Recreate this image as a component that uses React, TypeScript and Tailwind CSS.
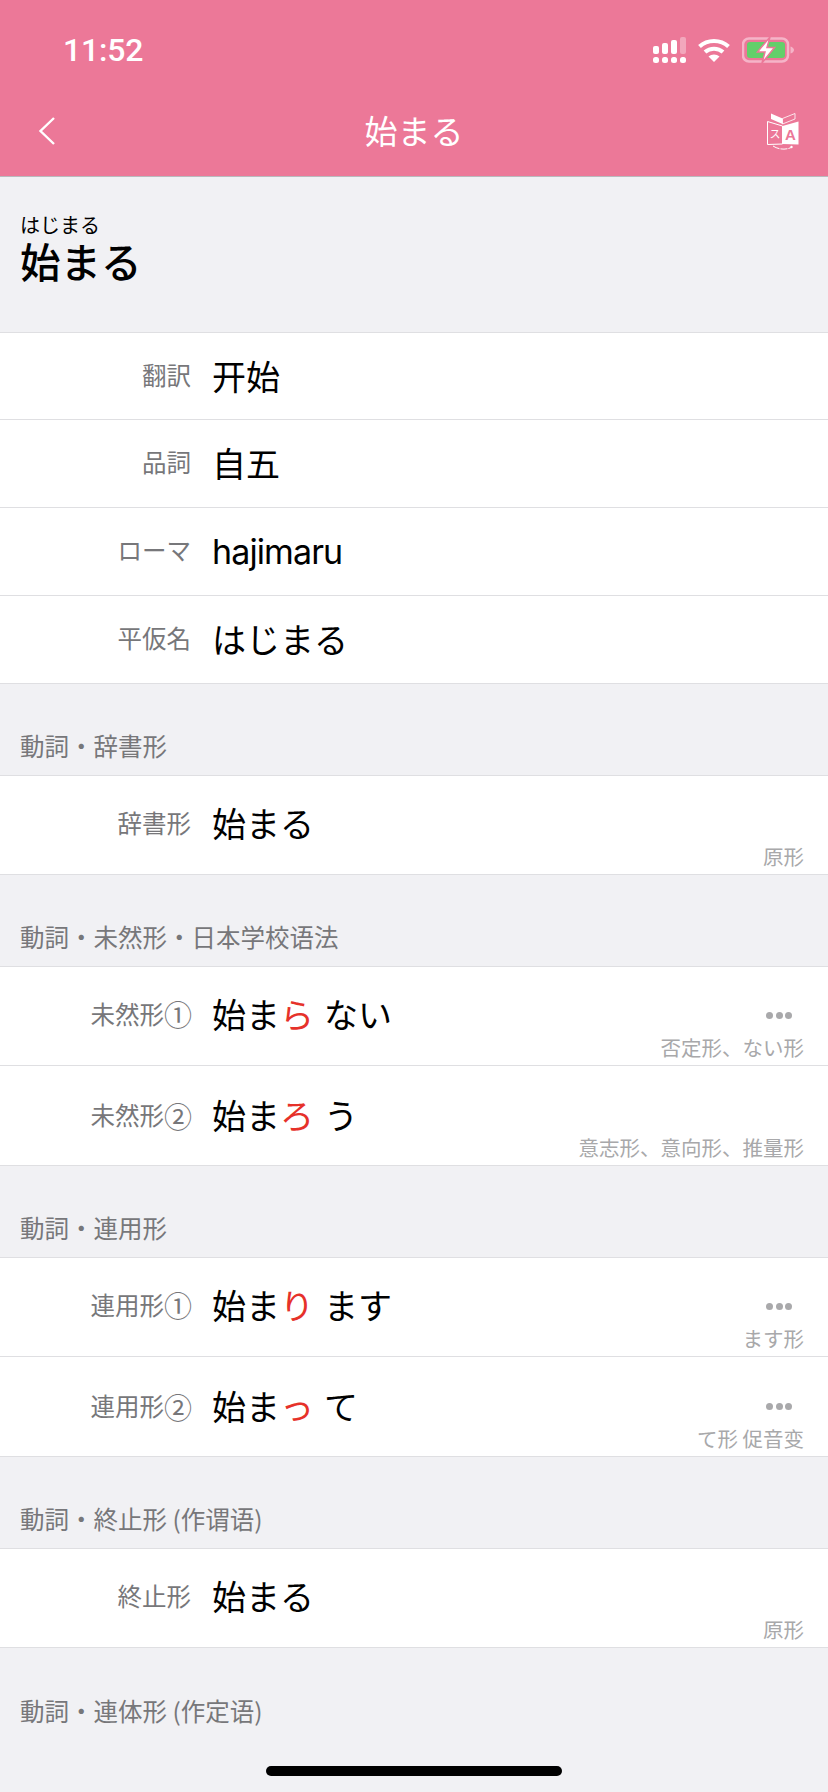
import React from 'react';

const jp = "font-['Noto_Sans_CJK_JP','Noto_Sans_CJK_SC',sans-serif]";

const StatusIcons = () => (
  <div className="flex items-center">
    <svg width="33" height="26" viewBox="0 0 33 26" fill="white">
      <rect x="0" y="9" width="6" height="8" rx="2" />
      <rect x="9" y="6" width="6" height="11" rx="2" />
      <rect x="18" y="3" width="6" height="14" rx="2" />
      <rect x="27" y="0" width="6" height="17" rx="2" opacity="0.35" />
      <rect x="0" y="20" width="6" height="6" rx="2.5" />
      <rect x="9" y="20" width="6" height="6" rx="2.5" />
      <rect x="18" y="20" width="6" height="6" rx="2.5" />
      <rect x="27" y="20" width="6" height="6" rx="2.5" />
    </svg>
    <svg className="ml-[12px]" width="32" height="24" viewBox="0 0 32 24" fill="none" stroke="white" strokeWidth="4">
      <path d="M1.5 8.5C9.5 1 22.500 1 30.500 8.500" />
      <path d="M7 14C12 9.500 20 9.500 25 14" />
      <path d="M16 24L10.500 18.500C13.500 15.800 18.500 15.800 21.500 18.500Z" fill="white" stroke="none" />
    </svg>
    <svg className="ml-[12px]" width="52" height="26" viewBox="0 0 52 26" fill="none">
      <rect x="1" y="1.500" width="45" height="23" rx="6" stroke="#f5b4c8" strokeWidth="2.500" />
      <rect x="5" y="5" width="38" height="16" rx="3" fill="#63cf6a" />
      <path d="M48.500 9.500C50.500 10 52 11.500 52 13C52 14.500 50.500 16 48.500 16.500Z" fill="#f5b4c8" />
      <path d="M28 0L15.500 15H23L20 26L32.500 10.500H25Z" fill="white" stroke="#ec7898" strokeWidth="1.500" />
    </svg>
  </div>
);

const TranslateIcon = () => (
  <svg width="32" height="37" viewBox="0 0 32 37" fill="none">
    <path d="M4 0.500L15.500 5.500V11L4 6Z" fill="white" />
    <path d="M28 0.500L15.500 5.500V11L28 6Z" stroke="white" strokeWidth="0.800" />
    <path d="M0.500 8.500L15.500 13V31L0.500 31.500Z" stroke="white" strokeWidth="1" />
    <path d="M15.500 13L31.500 8.500V31.500L15.500 31Z" fill="white" />
    <text x="23.500" y="27" textAnchor="middle" fontSize="15" fontWeight="700" fill="#ec7898" fontFamily="Liberation Sans">A</text>
    <text x="8" y="25" textAnchor="middle" fontSize="11" fill="white" fontFamily="Noto Sans CJK JP">ス</text>
    <path d="M6 33C12 37 20 37 25 34" stroke="white" strokeWidth="1" strokeDasharray="7 1" />
    <circle cx="24.500" cy="34" r="1.200" fill="white" />
  </svg>
);

const Header = () => (
  <div className={`bg-[#ec7898] border-b border-[#b9b9bd] text-white h-[177px] ${jp}`}>
    <div className="flex items-center justify-between h-[88px] pl-[63px] pr-[34px] pt-[12px]">
      <span className="font-['Roboto',sans-serif] font-medium text-[32px] tracking-[-0.2px]">11:52</span>
      <StatusIcons />
    </div>
    <div className="grid grid-cols-[1fr_auto_1fr] items-center h-[88px] pl-[38px] pr-[29px] pb-[2px]">
      <svg width="18" height="28" viewBox="0 0 18 28" fill="none" stroke="white" strokeWidth="2.400">
        <path d="M16 1L2.500 14L16 27" />
      </svg>
      <span className="text-[33px] leading-none pb-[2px] mr-[9px]">始まる</span>
      <div className="justify-self-end">
        <TranslateIcon />
      </div>
    </div>
  </div>
);

type RowProps = {
  label: string;
  head?: string;
  red?: string;
  tail?: string;
  sub?: string;
  more?: boolean;
  font?: string;
  compact?: boolean;
  low?: boolean;
};

const Row = ({ label, head, red, tail, sub, more, font, compact, low }: RowProps) => {
  const circled = label.match(/[①②]/)?.[0];
  const plain = label.replace(/[①②]/, '');
  const labelPad = low ? 'pb-0' : compact ? 'pb-[2px]' : 'pb-[4px]';
  const valuePad = low ? 'pb-[2px]' : compact ? 'pb-[2px]' : 'pb-[6px]';
  return (
    <div className="flex items-stretch border-b border-[#dfdfe2] bg-white h-full">
      <div className={`w-[191px] shrink-0 flex items-center justify-end text-[24.500px] text-[#77777a] ${labelPad}`}>
        {plain}
        {circled && <span className="text-[28px] leading-none -mr-[1px]">{circled}</span>}
      </div>
      <div className={`ml-[21px] flex items-center text-[#000] text-[34px] ${valuePad} ${font || ''}`}>
        <span>{head}</span>
        {red && <span className="text-[#e6312a]">{red}</span>}
        {tail && <span className="ml-[10px]">{tail}</span>}
      </div>
      {sub && (
        <div className="ml-auto flex flex-col items-end justify-end pr-[24px] pb-[3px]">
          {more && (
            <div className="flex gap-[2.500px] mr-[12px] mb-[13px]">
              <span className="w-[7px] h-[7px] rounded-full bg-[#a9a9ab]" />
              <span className="w-[7px] h-[7px] rounded-full bg-[#a9a9ab]" />
              <span className="w-[7px] h-[7px] rounded-full bg-[#a9a9ab]" />
            </div>
          )}
          <span className="text-[20.500px] leading-[30px] text-[#a8a8aa]">{sub}</span>
        </div>
      )}
    </div>
  );
};

const SectionTitle = ({ children, noLine }: { children: string; noLine?: boolean }) => (
  <div className={`h-[92px] flex items-end pl-[20px] pb-[11px] text-[24.500px] leading-[36px] text-[#77777a] ${noLine ? '' : 'border-b border-[#dfdfe2]'}`}>
    {children}
  </div>
);

const Section = ({ title, rows }: { title: string; rows: RowProps[] }) => (
  <div>
    <SectionTitle>{title}</SectionTitle>
    {rows.map((r) => (
      <div key={r.label} className="h-[99px] nth-3:h-[100px]">
        <Row {...r} />
      </div>
    ))}
  </div>
);

const sections: { title: string; rows: RowProps[] }[] = [
  { title: '動詞・辞書形', rows: [{ label: '辞書形', head: '始まる', sub: '原形' }] },
  {
    title: '動詞・未然形・日本学校语法',
    rows: [
      { label: '未然形①', head: '始ま', red: 'ら', tail: 'ない', sub: '否定形、ない形', more: true },
      { label: '未然形②', head: '始ま', red: 'ろ', tail: 'う', sub: '意志形、意向形、推量形', low: true },
    ],
  },
  {
    title: '動詞・連用形',
    rows: [
      { label: '連用形①', head: '始ま', red: 'り', tail: 'ます', sub: 'ます形', more: true },
      { label: '連用形②', head: '始ま', red: 'っ', tail: 'て', sub: 'て形 促音变', more: true, low: true },
    ],
  },
  { title: '動詞・終止形 (作谓语)', rows: [{ label: '終止形', head: '始まる', sub: '原形' }] },
];

export default function App() {
  return (
    <div className={`relative w-[828px] h-[1792px] overflow-hidden bg-[#f1f1f4] ${jp}`}>
      <Header />
      <div className="h-[156px] border-b border-[#dfdfe2] pl-[20px] pt-[36px] text-black">
        <div className="text-[20px] leading-[24px]">はじまる</div>
        <div className="text-[40.500px] leading-[48px] font-medium">始まる</div>
      </div>
      <div className="h-[87px]"><Row compact label="翻訳" head="开始" /></div>
      <div className="h-[88px]"><Row compact label="品詞" head="自五" /></div>
      <div className="h-[88px]"><Row compact label="ローマ" head="hajimaru" font="font-['Inter',sans-serif] tracking-[-0.9px] pt-[2px]" /></div>
      <div className="h-[88px]"><Row compact label="平仮名" head="はじまる" /></div>
      {sections.map((s) => (
        <Section key={s.title} title={s.title} rows={s.rows} />
      ))}
      <SectionTitle noLine>動詞・連体形 (作定语)</SectionTitle>
      <div className="absolute left-[266px] bottom-[16px] w-[296px] h-[10px] rounded-full bg-black" />
    </div>
  );
}
